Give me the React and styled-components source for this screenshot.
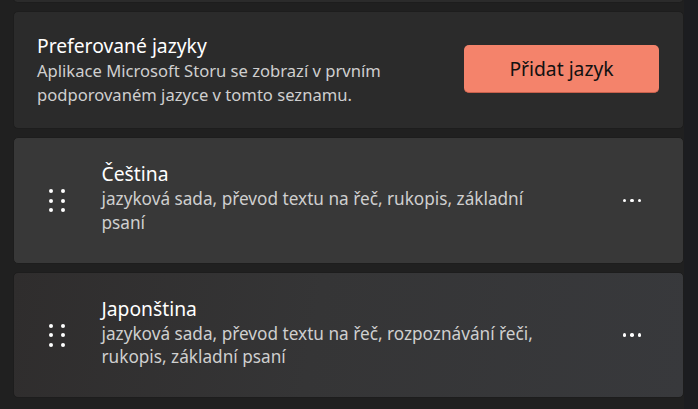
import React from 'react';
import styled, { createGlobalStyle } from 'styled-components';

const GlobalStyle = createGlobalStyle`
  html, body {
    margin: 0;
    padding: 0;
    background: #202020;
  }
  body {
    font-family: "Noto Sans", "Open Sans", sans-serif;
    -webkit-font-smoothing: antialiased;
  }
`;

const Page = styled.div`
  display: flex;
  width: 698px;
  height: 409px;
  overflow: hidden;
  background: #202020;
`;

const Column = styled.div`
  display: flex;
  flex-direction: column;
  gap: 8px;
  width: 671px;
  padding-left: 13px;
  margin-top: -6px;
`;

const Gutter = styled.div`
  flex: 1;
  background: #1c1d20;
`;

const Card = styled.div`
  display: flex;
  align-items: center;
  box-sizing: border-box;
  height: ${(p) => p.h}px;
  border-radius: 5px;
  background: ${(p) => p.bg};
  border: 1px solid #1d1d1d;
  flex-shrink: 0;
`;

const Header = styled.div`
  flex: 1;
  padding-left: 23px;
  padding-bottom: 1px;
`;

const Title = styled.div`
  color: #ffffff;
  font-size: 19.3px;
  line-height: 25px;
  margin-bottom: 1px;
`;

const Desc = styled.div`
  color: #cfcfcf;
  font-size: ${(p) => p.size}px;
  line-height: 23.5px;
  white-space: nowrap;
`;

const AddButton = styled.button`
  width: 195px;
  height: 48px;
  margin-right: 24px;
  margin-bottom: 2px;
  border: none;
  border-bottom: 1px solid #c8604c;
  border-radius: 5px;
  background: #f4836b;
  color: #111;
  font-family: inherit;
  font-size: 19.3px;
`;

const Handle = styled.div`
  display: grid;
  grid-template-columns: 4px 4px;
  column-gap: 7.5px;
  row-gap: 5.5px;
  margin-left: 35px;
  margin-right: 37px;
`;

const Dot = styled.span`
  width: ${(p) => p.size}px;
  height: ${(p) => p.size}px;
  border-radius: 50%;
  background: #ffffff;
`;

const LangInfo = styled.div`
  flex: 1;
  padding-bottom: 6px;
`;

const MoreButton = styled.div`
  display: flex;
  gap: 4px;
  margin-right: 42px;
`;

const languages = [
  {
    name: 'Čeština',
    lines: ['jazyková sada, převod textu na řeč, rukopis, základní', 'psaní'],
    h: 127,
    bg: '#383838',
  },
  {
    name: 'Japonština',
    lines: ['jazyková sada, převod textu na řeč, rozpoznávání řeči,', 'rukopis, základní psaní'],
    h: 126,
    bg: 'linear-gradient(100deg, #2f2d2d 0%, #353536 45%, #38393c 100%)',
  },
];

function LanguageRow({ lang }) {
  return (
    <Card h={lang.h} bg={lang.bg}>
      <Handle>
        {[0, 1, 2, 3, 4, 5].map((i) => (
          <Dot key={i} size={4} />
        ))}
      </Handle>
      <LangInfo>
        <Title>{lang.name}</Title>
        <Desc size={17.2}>
          {lang.lines[0]}
          <br />
          {lang.lines[1]}
        </Desc>
      </LangInfo>
      <MoreButton>
        <Dot size={3.5} />
        <Dot size={3.5} />
        <Dot size={3.5} />
      </MoreButton>
    </Card>
  );
}

export default function App() {
  return (
    <>
      <GlobalStyle />
      <Page>
        <Column>
          <Card h={9} bg="#2b2b2b" />
          <Card h={118} bg="#2b2b2b">
            <Header>
              <Title>Preferované jazyky</Title>
              <Desc size={16.6}>
                Aplikace Microsoft Storu se zobrazí v prvním
                <br />
                podporovaném jazyce v tomto seznamu.
              </Desc>
            </Header>
            <AddButton>Přidat jazyk</AddButton>
          </Card>
          {languages.map((lang) => (
            <LanguageRow key={lang.name} lang={lang} />
          ))}
        </Column>
        <Gutter />
      </Page>
    </>
  );
}
